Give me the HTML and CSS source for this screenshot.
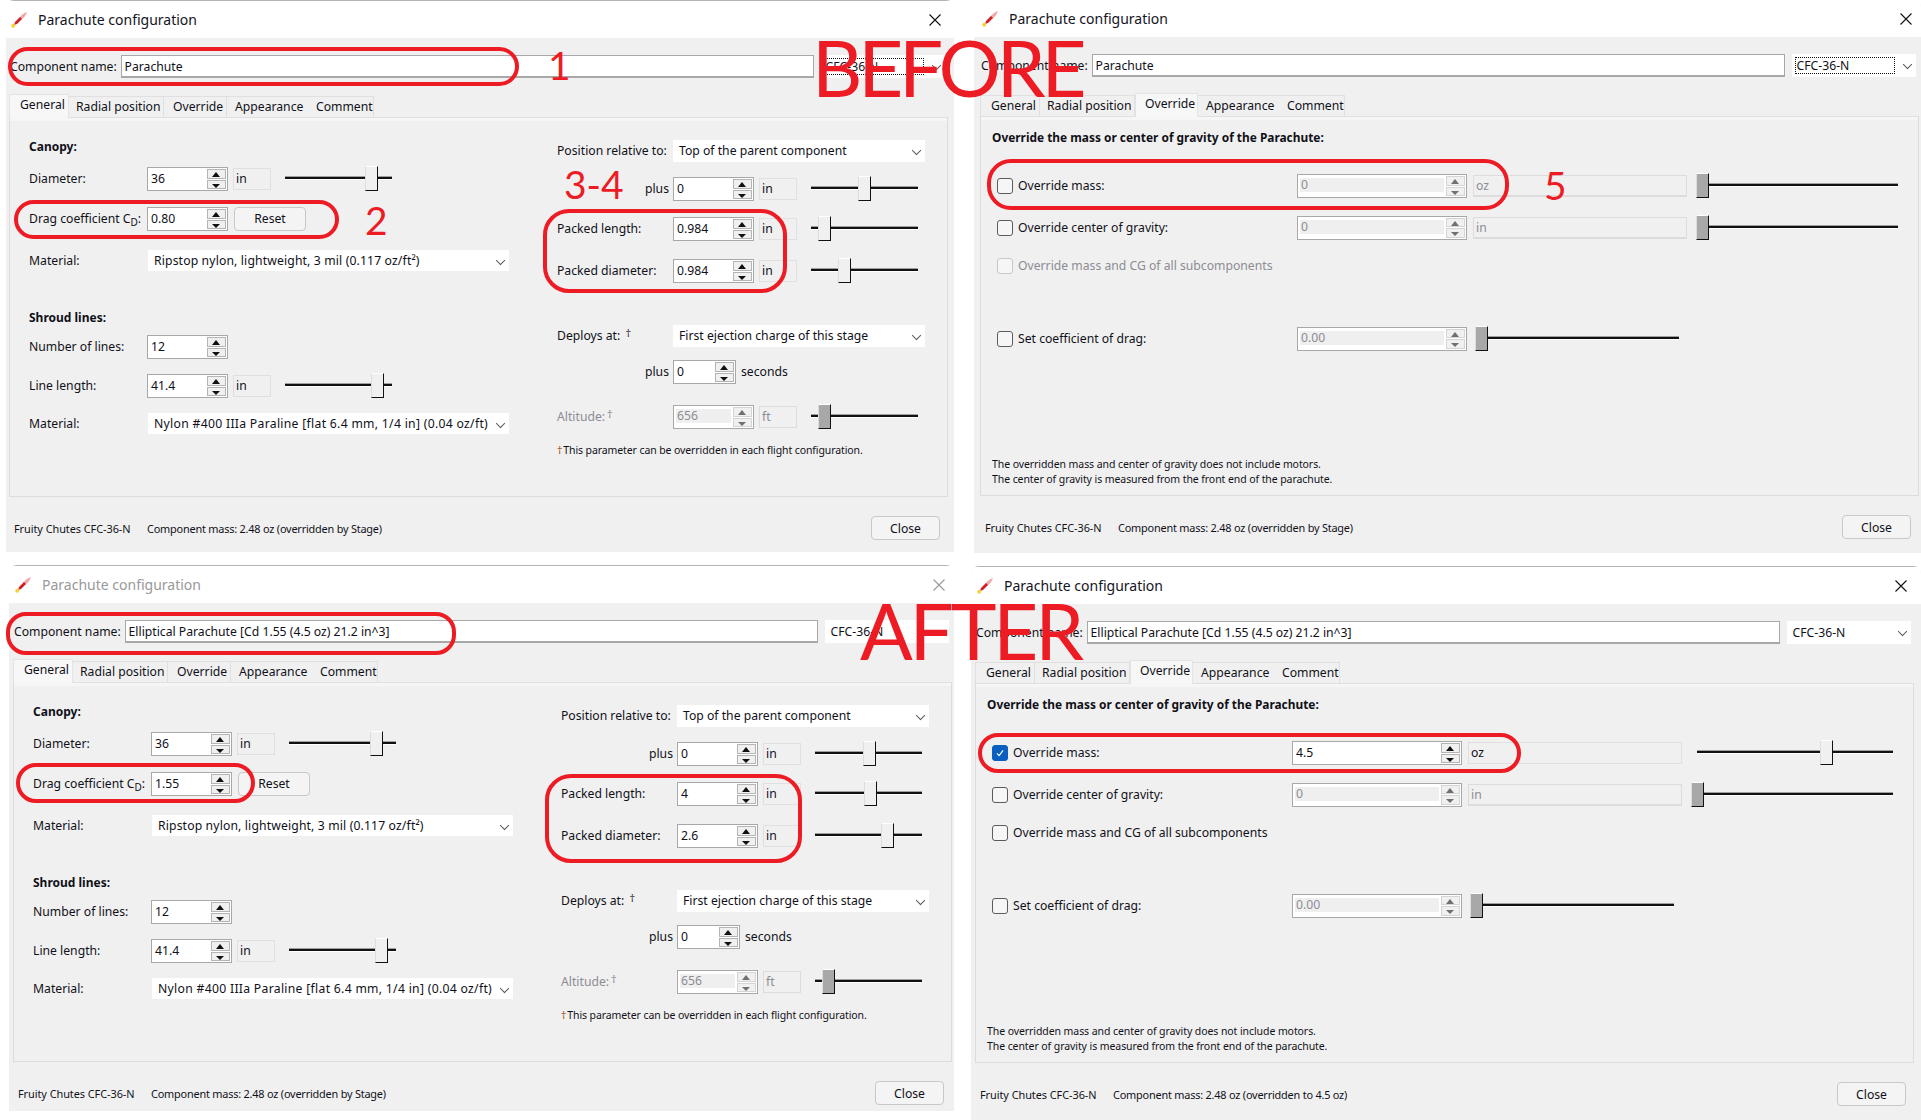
FILE: index.html
```html
<!DOCTYPE html>
<html lang="en">
<head>
<meta charset="utf-8">
<title>Parachute configuration: before and after</title>
<link rel="stylesheet" href="styles.css">
</head>
<body>
<main class="desktop">

<section class="win win-a">
  <div class="frame">
    <header class="titlebar">
      <svg class="rocket" viewBox="0 0 16 16"><path class="r-tail" d="M16 0 C13 1 10 3 8 6 L10 8 C13 6 15 3 16 0Z"/><path class="r-body" d="M9 5 L4 10 L3 13 L6 12 L11 7Z"/><circle class="r-flame" cx="2.2" cy="13.8" r="2"/></svg>
      <span class="title">Parachute configuration</span>
      <svg class="close-x" viewBox="0 0 12 12"><path d="M0.5 0.5L11.5 11.5M11.5 0.5L0.5 11.5"/></svg>
    </header>
    <div class="namerow">
      <label class="namelabel">Component name:</label>
      <div class="nameinput">Parachute</div>
      <div class="config"><span class="focus">CFC-36-N</span><i class="chev"></i></div>
    </div>
    <nav class="tabs">
      <span class="tab t-gen sel">General</span><span class="tab t-rad">Radial position</span><span class="tab t-ovr">Override</span><span class="tab t-app">Appearance</span><span class="tab t-com">Comment</span>
    </nav>
    <div class="panel split">
      <div class="col col-l">
        <div class="row"><b>Canopy:</b></div>
        <div class="row"><span class="lbl">Diameter:</span><div class="spin"><span class="val">36</span><span class="btns"><i class="up"></i><i class="dn"></i></span></div><span class="unit">in</span><div class="slider"><i class="thumb" style="left:80px"></i></div></div>
        <div class="row"><span class="lbl">Drag coefficient C<sub>D</sub>:</span><div class="spin"><span class="val">0.80</span><span class="btns"><i class="up"></i><i class="dn"></i></span></div><button class="btn reset">Reset</button></div>
        <div class="row"><span class="lbl">Material:</span><div class="combo wide"><span>Ripstop nylon, lightweight, 3 mil (0.117 oz/ft²)</span><i class="chev"></i></div></div>
        <div class="row"><b>Shroud lines:</b></div>
        <div class="row"><span class="lbl">Number of lines:</span><div class="spin"><span class="val">12</span><span class="btns"><i class="up"></i><i class="dn"></i></span></div></div>
        <div class="row"><span class="lbl">Line length:</span><div class="spin"><span class="val">41.4</span><span class="btns"><i class="up"></i><i class="dn"></i></span></div><span class="unit">in</span><div class="slider"><i class="thumb" style="left:86px"></i></div></div>
        <div class="row"><span class="lbl">Material:</span><div class="combo wide spaced"><span>Nylon #400 IIIa Paraline [flat 6.4 mm, 1/4 in] (0.04 oz/ft)</span><i class="chev"></i></div></div>
      </div>
      <div class="col col-r">
        <div class="row"><span class="lbl">Position relative to:</span><div class="combo"><span>Top of the parent component</span><i class="chev"></i></div></div>
        <div class="row"><span class="lbl end">plus</span><div class="spin"><span class="val">0</span><span class="btns"><i class="up"></i><i class="dn"></i></span></div><span class="unit">in</span><div class="slider"><i class="thumb" style="left:47px"></i></div></div>
        <div class="row"><span class="lbl">Packed length:</span><div class="spin"><span class="val">0.984</span><span class="btns"><i class="up"></i><i class="dn"></i></span></div><span class="unit">in</span><div class="slider"><i class="thumb" style="left:7px"></i></div></div>
        <div class="row"><span class="lbl">Packed diameter:</span><div class="spin"><span class="val">0.984</span><span class="btns"><i class="up"></i><i class="dn"></i></span></div><span class="unit">in</span><div class="slider"><i class="thumb" style="left:27px"></i></div></div>
        <div class="row"><span class="lbl">Deploys at: <sup class="dag">†</sup></span><div class="combo"><span>First ejection charge of this stage</span><i class="chev"></i></div></div>
        <div class="row"><span class="lbl end">plus</span><div class="spin short"><span class="val">0</span><span class="btns"><i class="up"></i><i class="dn"></i></span></div><span class="seconds">seconds</span></div>
        <div class="row dis"><span class="lbl">Altitude:<sup class="dag">†</sup></span><div class="spin"><span class="val">656</span><span class="btns"><i class="up"></i><i class="dn"></i></span></div><span class="unit">ft</span><div class="slider"><i class="thumb" style="left:7px"></i></div></div>
        <div class="row note"><span class="dagn">†</span> This parameter can be overridden in each flight configuration.</div>
      </div>
    </div>
    <footer class="foot">
      <span class="f1">Fruity Chutes CFC-36-N</span><span class="f2">Component mass: 2.48 oz (overridden by Stage)</span>
      <button class="btn close">Close</button>
    </footer>
  </div>
</section>

<section class="win win-b">
  <div class="frame">
    <header class="titlebar">
      <svg class="rocket" viewBox="0 0 16 16"><path class="r-tail" d="M16 0 C13 1 10 3 8 6 L10 8 C13 6 15 3 16 0Z"/><path class="r-body" d="M9 5 L4 10 L3 13 L6 12 L11 7Z"/><circle class="r-flame" cx="2.2" cy="13.8" r="2"/></svg>
      <span class="title">Parachute configuration</span>
      <svg class="close-x" viewBox="0 0 12 12"><path d="M0.5 0.5L11.5 11.5M11.5 0.5L0.5 11.5"/></svg>
    </header>
    <div class="namerow">
      <label class="namelabel">Component name:</label>
      <div class="nameinput">Parachute</div>
      <div class="config"><span class="focus">CFC-36-N</span><i class="chev"></i></div>
    </div>
    <nav class="tabs">
      <span class="tab t-gen">General</span><span class="tab t-rad">Radial position</span><span class="tab t-ovr sel">Override</span><span class="tab t-app">Appearance</span><span class="tab t-com">Comment</span>
    </nav>
    <div class="panel ovr">
      <b class="ovr-head">Override the mass or center of gravity of the Parachute:</b>
      <div class="orow"><i class="check"></i><span class="olbl">Override mass:</span><div class="spin wide dis"><span class="val">0</span><span class="btns"><i class="up"></i><i class="dn"></i></span></div><span class="unit long dis">oz</span><div class="slider long dis"><i class="thumb" style="left:0"></i></div></div>
      <div class="orow"><i class="check"></i><span class="olbl">Override center of gravity:</span><div class="spin wide dis"><span class="val">0</span><span class="btns"><i class="up"></i><i class="dn"></i></span></div><span class="unit long dis">in</span><div class="slider long dis"><i class="thumb" style="left:0"></i></div></div>
      <div class="orow dis"><i class="check"></i><span class="olbl">Override mass and CG of all subcomponents</span></div>
      <div class="orow"><i class="check"></i><span class="olbl">Set coefficient of drag:</span><div class="spin wide dis"><span class="val">0.00</span><span class="btns"><i class="up"></i><i class="dn"></i></span></div><div class="slider drag dis"><i class="thumb" style="left:0"></i></div></div>
      <p class="ovr-note">The overridden mass and center of gravity does not include motors.<br>The center of gravity is measured from the front end of the parachute.</p>
    </div>
    <footer class="foot">
      <span class="f1">Fruity Chutes CFC-36-N</span><span class="f2">Component mass: 2.48 oz (overridden by Stage)</span>
      <button class="btn close">Close</button>
    </footer>
  </div>
</section>

<section class="win win-c">
  <div class="frame">
    <header class="titlebar inactive">
      <svg class="rocket" viewBox="0 0 16 16"><path class="r-tail" d="M16 0 C13 1 10 3 8 6 L10 8 C13 6 15 3 16 0Z"/><path class="r-body" d="M9 5 L4 10 L3 13 L6 12 L11 7Z"/><circle class="r-flame" cx="2.2" cy="13.8" r="2"/></svg>
      <span class="title">Parachute configuration</span>
      <svg class="close-x" viewBox="0 0 12 12"><path d="M0.5 0.5L11.5 11.5M11.5 0.5L0.5 11.5"/></svg>
    </header>
    <div class="namerow">
      <label class="namelabel">Component name:</label>
      <div class="nameinput">Elliptical Parachute [Cd 1.55 (4.5 oz) 21.2 in^3]</div>
      <div class="config"><span class="plain">CFC-36-N</span><i class="chev"></i></div>
    </div>
    <nav class="tabs">
      <span class="tab t-gen sel">General</span><span class="tab t-rad">Radial position</span><span class="tab t-ovr">Override</span><span class="tab t-app">Appearance</span><span class="tab t-com">Comment</span>
    </nav>
    <div class="panel split">
      <div class="col col-l">
        <div class="row"><b>Canopy:</b></div>
        <div class="row"><span class="lbl">Diameter:</span><div class="spin"><span class="val">36</span><span class="btns"><i class="up"></i><i class="dn"></i></span></div><span class="unit">in</span><div class="slider"><i class="thumb" style="left:81px"></i></div></div>
        <div class="row"><span class="lbl">Drag coefficient C<sub>D</sub>:</span><div class="spin"><span class="val">1.55</span><span class="btns"><i class="up"></i><i class="dn"></i></span></div><button class="btn reset">Reset</button></div>
        <div class="row"><span class="lbl">Material:</span><div class="combo wide"><span>Ripstop nylon, lightweight, 3 mil (0.117 oz/ft²)</span><i class="chev"></i></div></div>
        <div class="row"><b>Shroud lines:</b></div>
        <div class="row"><span class="lbl">Number of lines:</span><div class="spin"><span class="val">12</span><span class="btns"><i class="up"></i><i class="dn"></i></span></div></div>
        <div class="row"><span class="lbl">Line length:</span><div class="spin"><span class="val">41.4</span><span class="btns"><i class="up"></i><i class="dn"></i></span></div><span class="unit">in</span><div class="slider"><i class="thumb" style="left:86px"></i></div></div>
        <div class="row"><span class="lbl">Material:</span><div class="combo wide spaced"><span>Nylon #400 IIIa Paraline [flat 6.4 mm, 1/4 in] (0.04 oz/ft)</span><i class="chev"></i></div></div>
      </div>
      <div class="col col-r">
        <div class="row"><span class="lbl">Position relative to:</span><div class="combo"><span>Top of the parent component</span><i class="chev"></i></div></div>
        <div class="row"><span class="lbl end">plus</span><div class="spin"><span class="val">0</span><span class="btns"><i class="up"></i><i class="dn"></i></span></div><span class="unit">in</span><div class="slider"><i class="thumb" style="left:48px"></i></div></div>
        <div class="row"><span class="lbl">Packed length:</span><div class="spin"><span class="val">4</span><span class="btns"><i class="up"></i><i class="dn"></i></span></div><span class="unit">in</span><div class="slider"><i class="thumb" style="left:49px"></i></div></div>
        <div class="row"><span class="lbl">Packed diameter:</span><div class="spin"><span class="val">2.6</span><span class="btns"><i class="up"></i><i class="dn"></i></span></div><span class="unit">in</span><div class="slider"><i class="thumb" style="left:66px"></i></div></div>
        <div class="row"><span class="lbl">Deploys at: <sup class="dag">†</sup></span><div class="combo"><span>First ejection charge of this stage</span><i class="chev"></i></div></div>
        <div class="row"><span class="lbl end">plus</span><div class="spin short"><span class="val">0</span><span class="btns"><i class="up"></i><i class="dn"></i></span></div><span class="seconds">seconds</span></div>
        <div class="row dis"><span class="lbl">Altitude:<sup class="dag">†</sup></span><div class="spin"><span class="val">656</span><span class="btns"><i class="up"></i><i class="dn"></i></span></div><span class="unit">ft</span><div class="slider"><i class="thumb" style="left:7px"></i></div></div>
        <div class="row note"><span class="dagn">†</span> This parameter can be overridden in each flight configuration.</div>
      </div>
    </div>
    <footer class="foot">
      <span class="f1">Fruity Chutes CFC-36-N</span><span class="f2">Component mass: 2.48 oz (overridden by Stage)</span>
      <button class="btn close">Close</button>
    </footer>
  </div>
</section>

<section class="win win-d">
  <div class="frame">
    <header class="titlebar">
      <svg class="rocket" viewBox="0 0 16 16"><path class="r-tail" d="M16 0 C13 1 10 3 8 6 L10 8 C13 6 15 3 16 0Z"/><path class="r-body" d="M9 5 L4 10 L3 13 L6 12 L11 7Z"/><circle class="r-flame" cx="2.2" cy="13.8" r="2"/></svg>
      <span class="title">Parachute configuration</span>
      <svg class="close-x" viewBox="0 0 12 12"><path d="M0.5 0.5L11.5 11.5M11.5 0.5L0.5 11.5"/></svg>
    </header>
    <div class="namerow">
      <label class="namelabel">Component name:</label>
      <div class="nameinput">Elliptical Parachute [Cd 1.55 (4.5 oz) 21.2 in^3]</div>
      <div class="config"><span class="plain">CFC-36-N</span><i class="chev"></i></div>
    </div>
    <nav class="tabs">
      <span class="tab t-gen">General</span><span class="tab t-rad">Radial position</span><span class="tab t-ovr sel">Override</span><span class="tab t-app">Appearance</span><span class="tab t-com">Comment</span>
    </nav>
    <div class="panel ovr">
      <b class="ovr-head">Override the mass or center of gravity of the Parachute:</b>
      <div class="orow"><i class="check on"><svg viewBox="0 0 16 16"><path d="M4.5 8.5L7 11L11.5 5"/></svg></i><span class="olbl">Override mass:</span><div class="spin wide"><span class="val">4.5</span><span class="btns"><i class="up"></i><i class="dn"></i></span></div><span class="unit long">oz</span><div class="slider long"><i class="thumb" style="left:129px"></i></div></div>
      <div class="orow"><i class="check"></i><span class="olbl">Override center of gravity:</span><div class="spin wide dis"><span class="val">0</span><span class="btns"><i class="up"></i><i class="dn"></i></span></div><span class="unit long dis">in</span><div class="slider long dis"><i class="thumb" style="left:0"></i></div></div>
      <div class="orow"><i class="check"></i><span class="olbl">Override mass and CG of all subcomponents</span></div>
      <div class="orow"><i class="check"></i><span class="olbl">Set coefficient of drag:</span><div class="spin wide dis"><span class="val">0.00</span><span class="btns"><i class="up"></i><i class="dn"></i></span></div><div class="slider drag dis"><i class="thumb" style="left:0"></i></div></div>
      <p class="ovr-note">The overridden mass and center of gravity does not include motors.<br>The center of gravity is measured from the front end of the parachute.</p>
    </div>
    <footer class="foot">
      <span class="f1">Fruity Chutes CFC-36-N</span><span class="f2">Component mass: 2.48 oz (overridden to 4.5 oz)</span>
      <button class="btn close">Close</button>
    </footer>
  </div>
</section>

<i class="ring ring-1"></i>
<i class="ring ring-2"></i>
<i class="ring ring-34"></i>
<i class="ring ring-5"></i>
<i class="ring ring-a1"></i>
<i class="ring ring-a2"></i>
<i class="ring ring-a34"></i>
<i class="ring ring-a5"></i>
<span class="mark big m-before">BEFORE</span>
<span class="mark big m-after">AFTER</span>
<span class="mark num n-1">1</span>
<span class="mark num n-2">2</span>
<span class="mark num n-34">3-4</span>
<span class="mark num n-5">5</span>

</main>
</body>
</html>
```

FILE: styles.css
```css
* { box-sizing: border-box; }
html, body { margin: 0; padding: 0; background: #fff; }
body { font-family: "Noto Sans", "Liberation Sans", sans-serif; font-size: 12.2px; color: #101018; }
.desktop { position: relative; width: 1921px; height: 1120px; overflow: hidden; }

/* windows sit on a free canvas */
.win { position: absolute; overflow: hidden; background: #f0f0f0; border-radius: 8px 8px 0 0; }
.win-a { left: 6px; top: 0; width: 948px; height: 552px; }
.win-b { left: 974px; top: -1px; width: 947px; height: 554px; }
.win-c { left: 9px; top: 565px; width: 945px; height: 546px; }
.win-d { left: 971px; top: 566px; width: 950px; height: 554px; }
.win-b .frame { margin-left: 3px; }
.win-c .frame { margin-left: 1px; }
.win-d .frame { margin-left: 1px; }
.win-b .titlebar { margin-left: -3px; padding-left: 3px; }
.win-c .titlebar, .win-d .titlebar { margin-left: -1px; padding-left: 1px; }

.frame { width: 948px; display: flex; flex-direction: column; }
.titlebar { height: 38px; flex: none; display: flex; align-items: center; background: #fff; border-top: 1px solid #b4b4b4; width: 960px; }
.rocket { width: 16px; height: 16px; margin-left: 5px; flex: none; }
.r-tail { fill: #f0a8a8; }
.r-body { fill: #cf1f26; }
.r-flame { fill: #f6d23a; }
.title { margin-left: 11px; font-size: 14px; color: #14141e; width: 891px; flex: none; }
.close-x { width: 12px; height: 12px; flex: none; }
.close-x path { stroke: #111; stroke-width: 1.1; fill: none; }
.inactive .title { color: #999; }
.inactive .close-x path { stroke: #999; }

.namerow { display: flex; align-items: stretch; height: 23px; margin-top: 17px; flex: none; padding-left: 4px; }
.namelabel { width: 110.6px; line-height: 23px; white-space: nowrap; }
.nameinput { width: 693px; background: #fff; border: 1px solid #a8a8a8; border-bottom-width: 2px; padding-left: 3px; line-height: 21px; }
.config { width: 124px; margin-left: 7px; background: #fff; display: flex; align-items: center; position: relative; padding-left: 3px; }
.focus { border: 1px dotted #111; width: 100px; height: 17px; line-height: 15px; padding-left: 1px; }
.plain { padding-left: 3px; }
.chev { position: absolute; right: 5px; top: 7px; width: 7px; height: 7px; border-right: 1px solid #555; border-bottom: 1px solid #555; transform: rotate(45deg) scale(.95); }

.tabs { display: flex; align-items: flex-end; height: 24px; margin-top: 15px; padding-left: 3px; flex: none; }
.tab { height: 21px; line-height: 20px; background: #f0f0f0; border: 1px solid #e0e0e0; border-bottom: 0; border-left-width: 0; white-space: nowrap; }
.t-gen { width: 60px; padding-left: 10px; border-left-width: 1px; }
.t-rad { width: 95px; padding-left: 7px; }
.t-ovr { width: 63px; padding-left: 9px; }
.t-app { width: 77px; padding-left: 8px; border-right: 0; }
.t-com { width: 70px; padding-left: 12px; }
.tab.sel { height: 24px; padding-bottom: 3px; background: #f7f7f7; position: relative; margin-bottom: -1px; z-index: 1; border-color: #e4e4e4; border-left-width: 1px; }

.panel { margin-left: 3px; width: 939px; height: 380px; flex: none; border: 1px solid #dcdcdc; border-top-color: #e0e0e0; box-shadow: inset 0 3px 0 #f6f6f6; }
.split { display: flex; }
.col { display: flex; flex-direction: column; }
.col-l { width: 547px; padding: 17px 0 0 19px; flex: none; }
.col-r { padding: 21px 0 0 0; }
.row { display: flex; align-items: center; height: 24px; flex: none; white-space: nowrap; }
.row > b { padding-bottom: 2px; font-size: 12px; }
.col-l .row:nth-child(2) { margin-top: 8px; }
.col-l .row:nth-child(3) { margin-top: 16px; }
.col-l .row:nth-child(4) { margin-top: 18px; }
.col-l .row:nth-child(5) { margin-top: 33px; }
.col-l .row:nth-child(6) { margin-top: 5px; }
.col-l .row:nth-child(7) { margin-top: 15px; }
.col-l .row:nth-child(8) { margin-top: 14px; }
.col-r .row:nth-child(2) { margin-top: 14px; }
.col-r .row:nth-child(3) { margin-top: 16px; }
.col-r .row:nth-child(4) { margin-top: 18px; }
.col-r .row:nth-child(5) { margin-top: 41px; }
.col-r .row:nth-child(6) { margin-top: 12px; }
.col-r .row:nth-child(7) { margin-top: 21px; }
.col-r .row:nth-child(8) { margin-top: 9px; }
.lbl { padding-bottom: 1px; }
.col-l .lbl { width: 118px; }
.col-r .lbl { width: 116px; }
.lbl.end { text-align: right; padding-right: 4px; }
sub { font-size: 10px; line-height: 0; vertical-align: -3px; }
.dag { font-size: 11px; line-height: 0; vertical-align: 3px; color: #403040; margin-left: 2px; }
.dagn { color: #a0521c; margin-right: 1px; }
.note { font-size: 10.5px; letter-spacing: -.1px; }
.seconds { margin-left: 5px; padding-bottom: 2px; }

.spin { display: flex; width: 81px; height: 24px; background: #fff; border: 1px solid #a8a8a8; flex: none; }
.spin.short { width: 63px; }
.spin.wide { width: 170px; }
.val { flex: 1; padding-left: 3px; line-height: 21px; }
.btns { width: 19px; margin: 1px; display: flex; flex-direction: column; gap: 1px; flex: none; }
.btns i { flex: 1; background: #f0f0f0; border: 1px solid #b4b4b4; position: relative; }
.btns i::after { content: ""; position: absolute; left: 4px; border-left: 4px solid transparent; border-right: 4px solid transparent; }
.btns .up::after { top: 2px; border-bottom: 5px solid #111; }
.btns .dn::after { top: 3px; border-top: 4px solid #111; }

.unit { width: 38px; height: 22px; margin-left: 5px; border: 1px solid #e0e0e0; line-height: 19px; padding-left: 2px; flex: none; }
.unit.long { width: 214px; margin-left: 6px; }
.slider { position: relative; width: 107px; height: 24px; margin-left: 14px; flex: none; }
.slider::before { content: ""; position: absolute; left: 0; right: 0; top: 10px; height: 2px; background: #111; border-bottom: 1px solid #fff; box-sizing: content-box; box-shadow: 0 -1px 0 #a0a0a0; }
.thumb { position: absolute; top: -1px; width: 13px; height: 25px; background: #f0f0f0; border-style: solid; border-width: 1px; border-color: #fff #111 #111 #ddd; }
.slider.long { width: 202px; margin-left: 9px; }
.slider.drag { width: 204px; margin-left: 8px; }
.slider.long::before, .slider.drag::before { left: 6px; }

.dis { color: #8c8c94; }
.dis .thumb, .slider.dis .thumb { background: #a8a8a8; }
.spin.dis, .row.dis .spin { background: #fff; }
.spin.dis .val, .row.dis .val { background: #efefef; margin: 3px 1px 5px 2px; padding-left: 1px; line-height: 14px; }
.spin.dis .btns i, .row.dis .btns i { border-color: #d4d4d4; }
.spin.dis .up::after, .row.dis .up::after { border-bottom-color: #707070; }
.spin.dis .dn::after, .row.dis .dn::after { border-top-color: #707070; }
.orow .unit.dis { border-width: 1px 1px 2px; border-color: #dcdcdc; }
.row.dis .unit { border-color: #dcdcdc; }
.row.dis .dag { color: #8c8c94; }

.combo { position: relative; width: 252px; height: 22px; background: #fff; padding-left: 6px; line-height: 21px; flex: none; }
.combo.wide { width: 361px; margin-left: 1px; border-bottom: 1px solid #f0f0f0; letter-spacing: .14px; }
.combo.spaced { letter-spacing: .3px; }

.btn { font: inherit; color: inherit; background: #f4f4f4; border: 1px solid #c8c8c8; border-radius: 4px; padding: 0; }
.reset { width: 72px; height: 24px; margin-left: 6px; margin-top: -1px; }
.close { width: 69px; height: 24px; margin-left: auto; margin-right: 14px; margin-top: 19px; }

.foot { display: flex; align-items: flex-start; height: 55px; flex: none; font-size: 10.9px; letter-spacing: -.05px; }
.f1 { width: 141px; padding-left: 8px; margin-top: 20px; line-height: 24px; white-space: nowrap; flex: none; }
.f2 { margin-top: 20px; line-height: 24px; white-space: nowrap; letter-spacing: -.2px; }
.foot .close { font-size: 12.2px; letter-spacing: 0; }

.ovr { padding-top: 8px; position: relative; display: flex; flex-direction: column; }
.ovr-head { margin-left: 11px; height: 24px; line-height: 24px; font-size: 11.9px; }
.orow { display: flex; align-items: center; height: 24px; flex: none; padding-left: 16px; white-space: nowrap; }
.orow:nth-of-type(1) { margin-top: 25px; }
.orow:nth-of-type(2) { margin-top: 17.5px; }
.orow:nth-of-type(3) { margin-top: 14px; }
.orow:nth-of-type(4) { margin-top: 49px; }
.check { width: 16px; height: 16px; flex: none; border: 1px solid #5c5c5c; border-radius: 3px; background: #f6f6f6; }
.orow.dis .check { border-color: #c8c8c8; }
.check.on { background: #0a5fc0; border-color: #0a5fc0; }
.check svg { display: block; width: 14px; height: 14px; }
.check path { stroke: #fff; stroke-width: 1.3; fill: none; }
.olbl { width: 284px; padding-left: 5px; padding-bottom: 1px; flex: none; }
.ovr-note { margin: 0 0 0 11px; font-size: 10.5px; line-height: 14.5px; position: absolute; bottom: 9px; letter-spacing: -.08px; }

/* hand-drawn annotations over the screenshot */
.ring { position: absolute; border: 4.5px solid #ed1c24; border-radius: 20px; z-index: 5; }
.ring-1 { left: 8px; top: 47px; width: 511px; height: 39px; }
.ring-2 { left: 14px; top: 200px; width: 325px; height: 39px; }
.ring-34 { left: 543px; top: 209px; width: 244px; height: 84px; border-radius: 26px; }
.ring-5 { left: 987px; top: 159px; width: 522px; height: 51px; border-radius: 24px; }
.ring-a1 { left: 6px; top: 612px; width: 450px; height: 43px; }
.ring-a2 { left: 16px; top: 763px; width: 239px; height: 40px; }
.ring-a34 { left: 545px; top: 774px; width: 257px; height: 89px; border-radius: 26px; }
.ring-a5 { left: 978px; top: 733px; width: 543px; height: 40px; }
.mark { position: absolute; z-index: 6; color: #ed1c24; font-family: Lato, "Liberation Sans", sans-serif; line-height: 1; }
.big { font-size: 78px; }
.m-before { left: 812px; top: 28px; letter-spacing: -4.2px; }
.m-after { left: 860px; top: 591px; letter-spacing: -3.2px; }
.num { font-size: 39px; }
.n-1 { left: 548px; top: 46px; }
.n-2 { left: 365px; top: 201px; }
.n-34 { left: 564px; top: 165px; }
.n-5 { left: 1544px; top: 166px; }
```
